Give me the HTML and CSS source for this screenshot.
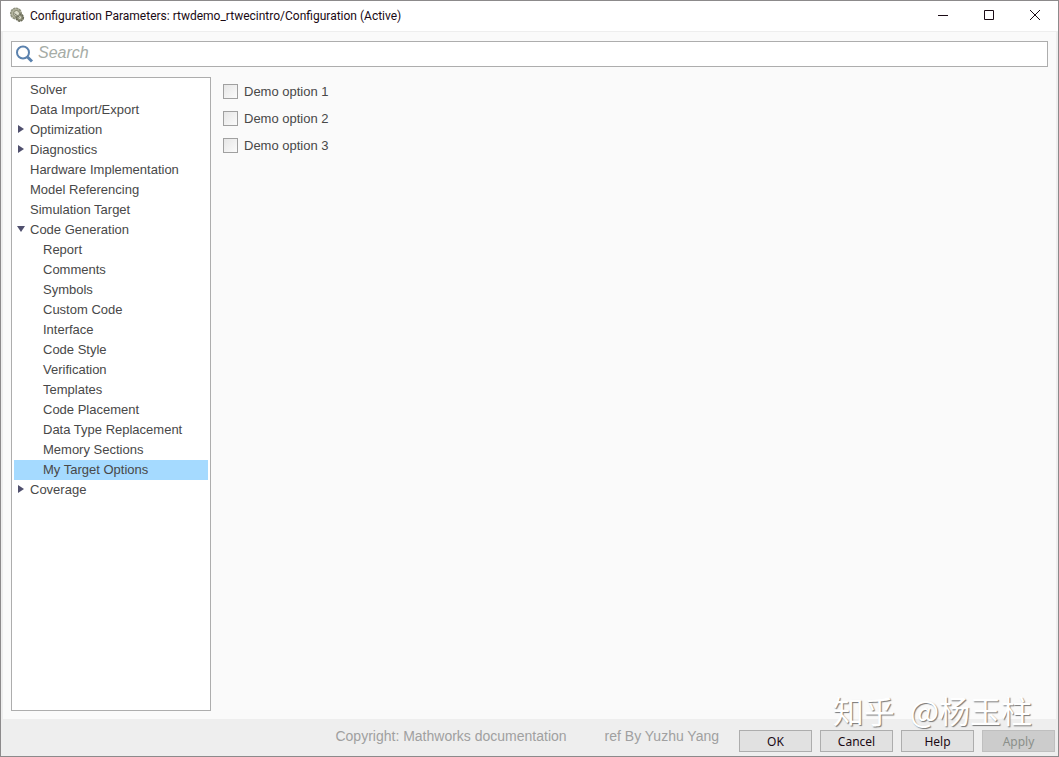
FILE: index.html
```
<!DOCTYPE html>
<html lang="en">
<head>
<meta charset="utf-8">
<title>Configuration Parameters: rtwdemo_rtwecintro/Configuration (Active)</title>
<link rel="stylesheet" href="styles.css">
</head>
<body>
<div class="window">
  <header class="titlebar">
    <svg class="app-icon" viewBox="0 0 16 16" width="16" height="16" aria-hidden="true">
      <circle cx="7" cy="6.5" r="5.2" fill="#b4b59f" stroke="#8f917e" stroke-width="1.6" stroke-dasharray="2.4 .6"/>
      <circle cx="10.8" cy="10.6" r="3.5" fill="#8f907a" stroke="#6a6b58" stroke-width="1.6" stroke-dasharray="2 .6"/>
      <circle cx="7.5" cy="6.5" r="3" fill="#dcdccb" stroke="#7c7d68"/>
      <circle cx="10.8" cy="10.6" r="1.3" fill="#dedece"/>
      <path d="M5.5 6.5l5 4" stroke="#66685a"/>
    </svg>
    <h1 class="title">Configuration Parameters: rtwdemo_rtwecintro/Configuration (Active)</h1>
    <button class="win-btn" aria-label="Minimize"><svg width="12" height="12" viewBox="0 0 12 12"><path d="M1 5.5h10"/></svg></button>
    <button class="win-btn" aria-label="Maximize"><svg width="12" height="12" viewBox="0 0 12 12"><path d="M1.5 .5h9v9h-9z"/></svg></button>
    <button class="win-btn" aria-label="Close"><svg width="12" height="12" viewBox="0 0 12 12"><path d="M1 0l10 10M11 0L1 10"/></svg></button>
  </header>

  <div class="content">
    <div class="search">
      <svg width="18" height="18" viewBox="0 0 18 18" aria-hidden="true">
        <circle cx="7" cy="7.5" r="6" fill="none" stroke="#5b82ae" stroke-width="2"/>
        <path d="M11.5 12l4.5 4.5" stroke="#5b82ae" stroke-width="3"/>
      </svg>
      <input type="text" placeholder="Search" aria-label="Search">
    </div>

    <div class="columns">
      <nav class="tree">
        <ul>
          <li><a href="#">Solver</a></li>
          <li><a href="#">Data Import/Export</a></li>
          <li><a class="closed" href="#">Optimization</a></li>
          <li><a class="closed" href="#">Diagnostics</a></li>
          <li><a href="#">Hardware Implementation</a></li>
          <li><a href="#">Model Referencing</a></li>
          <li><a href="#">Simulation Target</a></li>
          <li><a class="open" href="#">Code Generation</a>
            <ul>
              <li><a href="#">Report</a></li>
              <li><a href="#">Comments</a></li>
              <li><a href="#">Symbols</a></li>
              <li><a href="#">Custom Code</a></li>
              <li><a href="#">Interface</a></li>
              <li><a href="#">Code Style</a></li>
              <li><a href="#">Verification</a></li>
              <li><a href="#">Templates</a></li>
              <li><a href="#">Code Placement</a></li>
              <li><a href="#">Data Type Replacement</a></li>
              <li><a href="#">Memory Sections</a></li>
              <li><a class="selected" href="#">My Target Options</a></li>
            </ul>
          </li>
          <li><a class="closed" href="#">Coverage</a></li>
        </ul>
      </nav>

      <main class="options">
        <label><input type="checkbox"> Demo option 1</label>
        <label><input type="checkbox"> Demo option 2</label>
        <label><input type="checkbox"> Demo option 3</label>
      </main>
    </div>
  </div>

  <footer class="footer">
    <p class="credit"><span>Copyright: Mathworks documentation</span><span>ref By Yuzhu Yang</span></p>
    <button class="btn">OK</button>
    <button class="btn">Cancel</button>
    <button class="btn">Help</button>
    <button class="btn" disabled>Apply</button>
  </footer>

  <div class="watermark" lang="zh"><span>知乎</span><span>@杨玉柱</span></div>
</div>
</body>
</html>
```
FILE: styles.css
```
* { box-sizing: border-box; }
html, body { height: 100%; }
body { margin: 0; font-family: "Liberation Sans", Arial, sans-serif; font-size: 13px; color: #484848; }
ul { margin: 0; padding: 0; list-style: none; }
button { font-family: "Noto Sans", "Segoe UI", sans-serif; }

.window { position: relative; display: flex; flex-direction: column; height: 100%; border: 1px solid #8c8a8b; background: #eee; }

/* title bar */
.titlebar { display: flex; align-items: center; height: 30px; padding-left: 8px; background: #fff; }
.app-icon { margin-bottom: 2px; }
.title { flex: 1; margin: 0 0 0 5px; font: 12px Roboto, "Segoe UI", sans-serif; color: #1a0a14; white-space: nowrap; }
.win-btn { display: flex; align-items: center; justify-content: center; width: 46px; height: 28px; padding: 0; border: 0; background: none; }
.win-btn svg { fill: none; stroke: #1a0a14; }

/* body */
.content { flex: 1; display: flex; flex-direction: column; gap: 10px; margin: 1px 2px 0; padding: 9px 8px 8px; background: #fafafa; }
.search { display: flex; align-items: center; height: 26px; padding-left: 4px; border: 1px solid #adadad; background: #fff; }
.search input { flex: 1; height: 22px; padding: 0 0 2px 4px; border: 0; outline: 0; background: none; font: italic 16px "Liberation Sans", Arial, sans-serif; }
.search input::placeholder { color: #a6aca6; }
.columns { flex: 1; display: flex; }

.tree { width: 200px; padding: 2px; border: 1px solid #adadad; background: #fff; }
.tree a { display: flex; align-items: center; height: 20px; padding: 0 0 2px 16px; color: inherit; text-decoration: none; }
.tree ul ul a { padding-left: 29px; }
.tree .closed, .tree .open { padding-left: 3px; }
.tree .closed::before, .tree .open::before { content: ""; width: 9px; height: 8px; margin-right: 4px; background: #50506e; }
.tree .closed::before { clip-path: polygon(1px 0, 7px 4px, 1px 8px); }
.tree .open::before { clip-path: polygon(0 1px, 8px 1px, 4px 7px); }
.tree .selected { background: #a5daff; }

.options { flex: 1; display: flex; flex-direction: column; gap: 7px; padding: 4px 12px; }
.options label { display: flex; align-items: center; gap: 6px; height: 20px; }
.options input { appearance: none; width: 15px; height: 15px; margin: 0; border: 1px solid #a0a0a0; background: linear-gradient(135deg, #e6e6e6, #fbfbfb); }

/* bottom bar */
.footer { display: flex; align-items: center; justify-content: flex-end; gap: 8px; height: 37px; padding: 7px 3px 0 0; }
.credit { display: flex; gap: 38px; margin: 0 12px 11px 0; font-size: 14px; color: #a0a0a0; white-space: nowrap; }
.btn { width: 73px; height: 22px; padding: 2px 0 0; border: 1px solid #adadad; background: #e1e1e1; font-size: 12px; line-height: 18px; color: #1a0a14; }
.btn:disabled { border-color: #bfbfbf; background: #ccc; color: #8a8f8a; }

.watermark { position: absolute; right: 26px; bottom: 30px; display: flex; gap: 15px; font: 31px/32px "Noto Sans CJK SC", sans-serif; color: #fff; text-shadow: 1px 1px 1px #777; pointer-events: none; }
```
